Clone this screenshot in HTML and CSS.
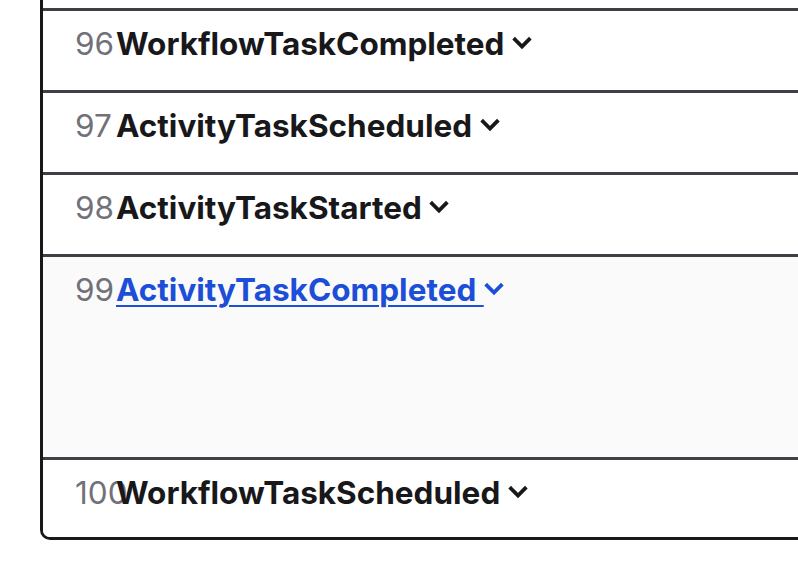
FILE: index.html
```html
<!DOCTYPE html>
<html>
<head>
<meta charset="utf-8">
<link rel="stylesheet" href="styles.css">
</head>
<body>
<div class="events">
  <div class="row row-partial"></div>
  <div class="row">
    <span class="num">96</span>
    <span class="name">WorkflowTaskCompleted <svg class="chev" viewBox="0 0 20 14"><path d="M3 3.5l7 7 7-7"/></svg></span>
  </div>
  <div class="row">
    <span class="num">97</span>
    <span class="name">ActivityTaskScheduled <svg class="chev" viewBox="0 0 20 14"><path d="M3 3.5l7 7 7-7"/></svg></span>
  </div>
  <div class="row">
    <span class="num">98</span>
    <span class="name">ActivityTaskStarted <svg class="chev" viewBox="0 0 20 14"><path d="M3 3.5l7 7 7-7"/></svg></span>
  </div>
  <div class="row row-active">
    <span class="num">99</span>
    <a class="name link" href="#">ActivityTaskCompleted <svg class="chev" viewBox="0 0 20 14"><path d="M3 3.5l7 7 7-7"/></svg></a>
  </div>
  <div class="row row-last">
    <span class="num">100</span>
    <span class="name">WorkflowTaskScheduled <svg class="chev" viewBox="0 0 20 14"><path d="M3 3.5l7 7 7-7"/></svg></span>
  </div>
</div>
</body>
</html>
```

FILE: styles.css
```css
html, body {
  margin: 0;
  padding: 0;
  background: #ffffff;
  overflow: hidden;
  width: 798px;
  height: 566px;
}
body {
  font-family: Inter, "Noto Sans", sans-serif;
}
.events {
  margin-left: 40px;
  width: 900px;
  border: 3px solid #18181b;
  border-top: none;
  border-radius: 0 0 10px 10px;
  overflow: hidden;
}
.row {
  display: flex;
  align-items: baseline;
  box-sizing: border-box;
  height: 82px;
  padding-left: 32px;
  padding-top: 10px;
  border-bottom: 3px solid #3f3f46;
  background: #ffffff;
  font-size: 31.5px;
  line-height: 45px;
}
.row-partial {
  height: 11px;
  padding-top: 0;
}
.row-active {
  height: 203px;
  background: #fafafa;
}
.row-last {
  border-bottom: none;
  height: 77px;
}
.num {
  flex: none;
  width: 41px;
  color: #71717a;
  font-weight: 400;
  white-space: nowrap;
}
.name {
  font-weight: 700;
  color: #18181b;
  white-space: nowrap;
}
.link {
  color: #1d4ed8;
  text-decoration: underline;
  text-decoration-thickness: 2px;
  text-underline-offset: 4px;
}
.chev {
  width: 20px;
  height: 14px;
  vertical-align: 5px;
  fill: none;
  stroke: currentColor;
  stroke-width: 3.8;
  stroke-linecap: square;
}
```
